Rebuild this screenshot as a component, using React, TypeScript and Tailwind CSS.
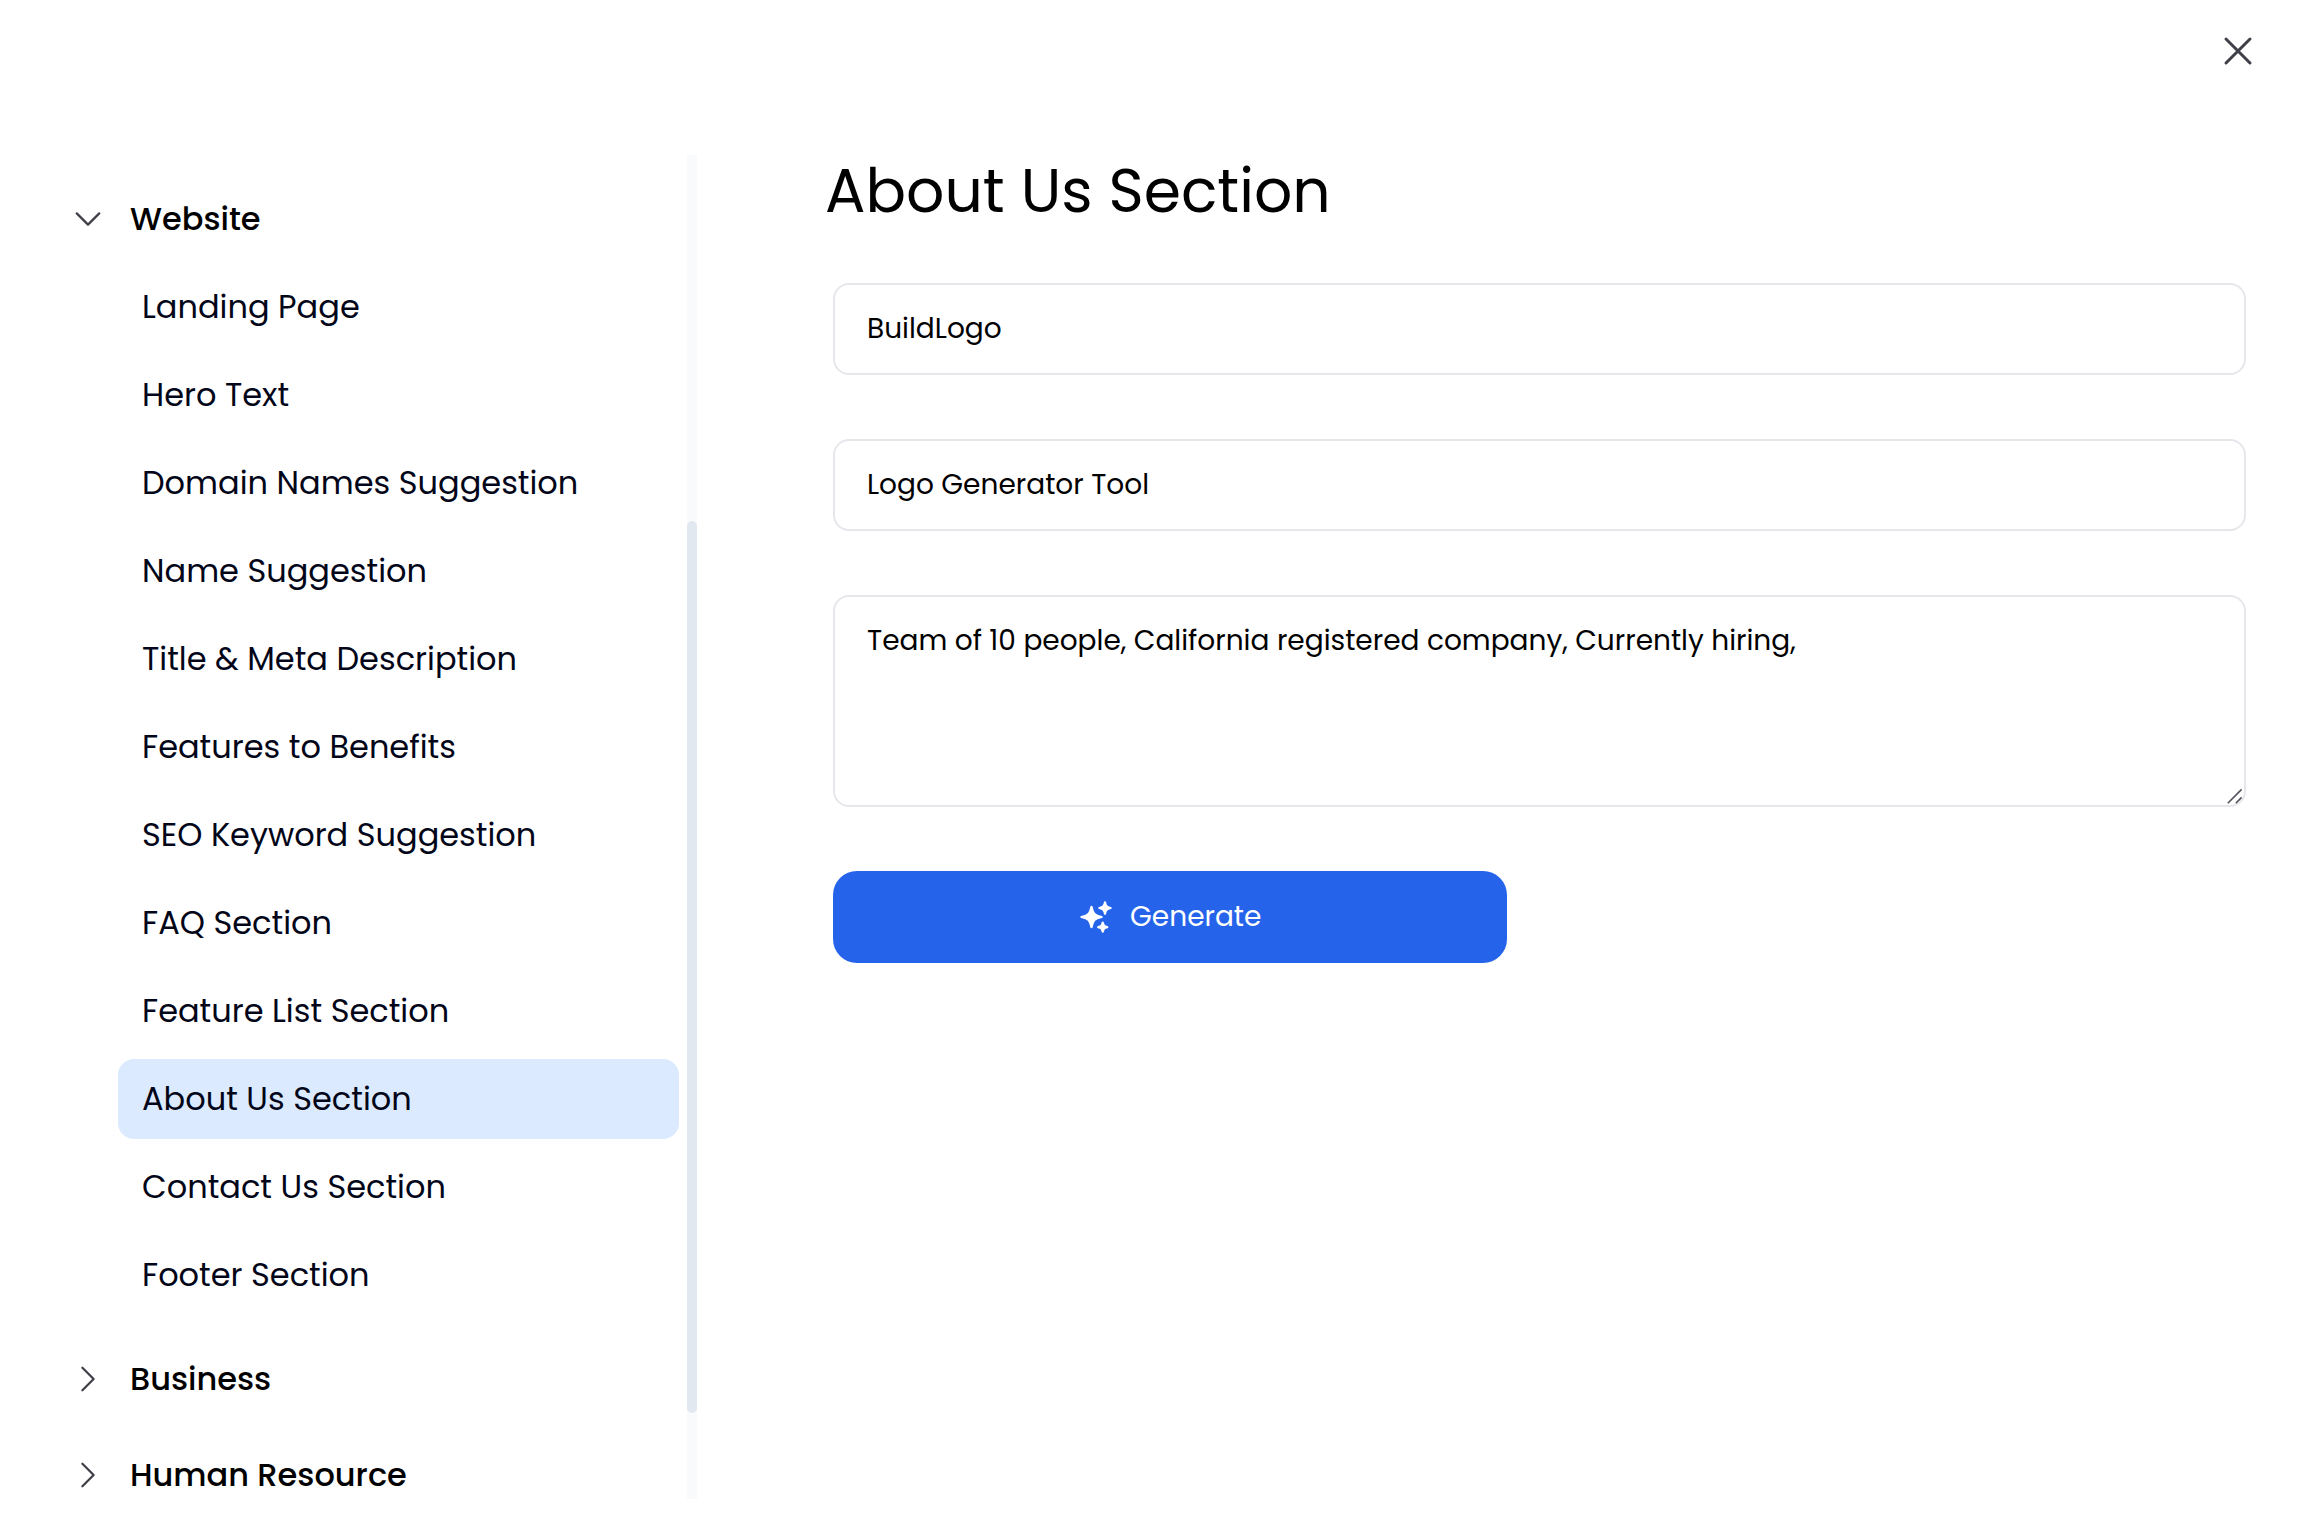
import { useState } from 'react';
import { HiOutlineChevronDown, HiOutlineChevronRight, HiOutlineXMark, HiSparkles } from 'react-icons/hi2';

const groups = [
  {
    name: 'Website',
    items: [
      'Landing Page',
      'Hero Text',
      'Domain Names Suggestion',
      'Name Suggestion',
      'Title & Meta Description',
      'Features to Benefits',
      'SEO Keyword Suggestion',
      'FAQ Section',
      'Feature List Section',
      'About Us Section',
      'Contact Us Section',
      'Footer Section',
    ],
  },
  { name: 'Business', items: [] },
  { name: 'Human Resource', items: [] },
];

const fieldClass =
  'block w-full rounded-2xl border-2 border-[#e5e7eb] bg-white px-8 text-[28px] leading-[40px] text-black outline-none focus:border-[#2563eb]';

export default function App() {
  const [open, setOpen] = useState('Website');
  const [active, setActive] = useState('About Us Section');

  return (
    <div className="flex h-screen flex-col bg-white pb-[41px] font-['Poppins',Inter,sans-serif] text-black">
      <header className="flex h-[155px] shrink-0 items-start justify-end px-[38px] pt-[27px]">
        <button type="button" aria-label="Close" className="text-zinc-700">
          <HiOutlineXMark className="size-12" />
        </button>
      </header>

      <div className="flex min-h-0 flex-1">
        <aside className="flex w-[697px] shrink-0">
          <nav className="flex min-w-0 flex-1 flex-col gap-8 overflow-y-auto pt-8 pr-2 pl-[70px] [scrollbar-width:none]">
            {groups.map((group) => (
              <div key={group.name}>
                <button
                  type="button"
                  aria-expanded={open === group.name}
                  onClick={() => setOpen(open === group.name ? '' : group.name)}
                  className="flex h-16 w-full items-center gap-6 text-left text-[32px] leading-[48px] font-medium"
                >
                  {open === group.name ? (
                    <HiOutlineChevronDown className="size-9 text-zinc-700" />
                  ) : (
                    <HiOutlineChevronRight className="size-9 text-zinc-700" />
                  )}
                  {group.name}
                </button>
                {open === group.name && group.items.length > 0 && (
                  <ul className="mt-4 ml-12 flex flex-col gap-2">
                    {group.items.map((item) => (
                      <li key={item}>
                        <a
                          href="#"
                          onClick={() => setActive(item)}
                          className={`flex h-20 items-center rounded-2xl px-6 text-[32px] leading-[48px] text-slate-950 ${
                            active === item ? 'bg-[#dbeafe]' : ''
                          }`}
                        >
                          {item}
                        </a>
                      </li>
                    ))}
                  </ul>
                )}
              </div>
            ))}
          </nav>
          {/* scroll rail */}
          <div className="flex w-[10px] shrink-0 flex-col bg-[#f8fafc] pt-[366px] pb-[86px]">
            <div className="flex-1 rounded-full bg-[#e2e8f0]" />
          </div>
        </aside>

        <main className="min-w-0 flex-1 pr-[54px] pl-[128px]">
          <h1 className="text-[60px] leading-[72px]">About Us Section</h1>
          <form className="mt-14 flex flex-col gap-16 pl-2" onSubmit={(e) => e.preventDefault()}>
            <input
              type="text"
              aria-label="Company name"
              defaultValue="BuildLogo"
              className={`${fieldClass} h-[92px]`}
            />
            <input
              type="text"
              aria-label="Company description"
              defaultValue="Logo Generator Tool"
              className={`${fieldClass} h-[92px]`}
            />
            <div className="relative">
              <textarea
                aria-label="Other details"
                defaultValue="Team of 10 people, California registered company, Currently hiring,"
                className={`${fieldClass} h-[212px] resize-none py-6`}
              />
              {/* resize grip */}
              <svg
                viewBox="0 0 16 16"
                className="pointer-events-none absolute right-[3px] bottom-[3px] size-4 text-zinc-600"
                fill="none"
                stroke="currentColor"
                strokeWidth="1.6"
                aria-hidden="true"
              >
                <path d="M0.8 15.2 L14.6 1.4 M8.8 15.2 L14.6 9.4" />
              </svg>
            </div>
            <div className="grid grid-cols-2 gap-[66px]">
              <button
                type="submit"
                className="flex h-[92px] items-center justify-center gap-4 rounded-3xl bg-[#2563eb] text-[28px] leading-[40px] text-white"
              >
                <HiSparkles className="size-9" />
                Generate
              </button>
            </div>
          </form>
        </main>
      </div>
    </div>
  );
}
